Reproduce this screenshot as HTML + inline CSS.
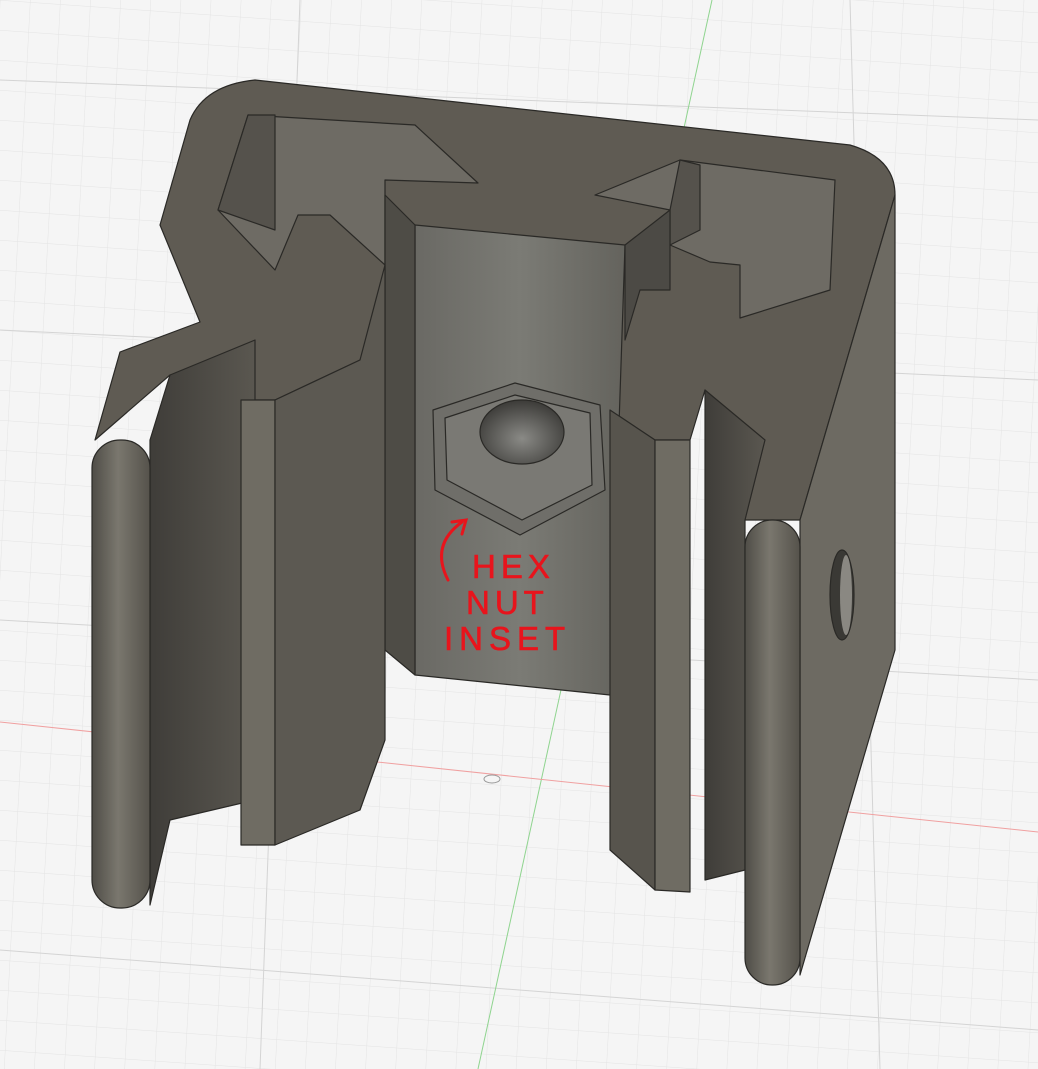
<!DOCTYPE html>
<html><head><meta charset="utf-8"><style>
html,body{margin:0;padding:0;background:#f5f5f5;}
svg{display:block}
</style></head><body>
<svg width="1038" height="1069" viewBox="0 0 1038 1069" xmlns="http://www.w3.org/2000/svg">
<defs>
<linearGradient id="cyl" x1="0" x2="1"><stop offset="0" stop-color="#4f4d47"/><stop offset="0.45" stop-color="#7a776e"/><stop offset="1" stop-color="#55524b"/></linearGradient>
<linearGradient id="wall" x1="0" x2="1"><stop offset="0" stop-color="#6a6964"/><stop offset="0.5" stop-color="#7b7b75"/><stop offset="1" stop-color="#64635d"/></linearGradient>
<linearGradient id="dark" x1="0" x2="1"><stop offset="0" stop-color="#3f3d39"/><stop offset="1" stop-color="#5a5750"/></linearGradient>
<radialGradient id="hole" cx="0.5" cy="0.6" r="0.6"><stop offset="0" stop-color="#8a8a86"/><stop offset="1" stop-color="#3c3b38"/></radialGradient>
<pattern id="grid" width="30" height="30" patternUnits="userSpaceOnUse" patternTransform="skewY(4) skewX(-3)">
<path d="M30,0 L0,0 0,30" fill="none" stroke="#e4e4e4" stroke-width="1"/>
</pattern>
</defs>
<rect width="1038" height="1069" fill="#f5f5f5"/>
<rect width="1038" height="1069" fill="url(#grid)"/>
<g stroke="#d4d4d4" stroke-width="1">
<line x1="0" y1="80" x2="1038" y2="120"/><line x1="0" y1="330" x2="1038" y2="380"/>
<line x1="0" y1="620" x2="1038" y2="680"/><line x1="0" y1="950" x2="1038" y2="1030"/>
<line x1="300" y1="0" x2="260" y2="1069"/><line x1="850" y1="0" x2="880" y2="1069"/>
</g>
<line x1="712" y1="0" x2="478" y2="1069" stroke="#8fd48f" stroke-width="1"/>
<line x1="0" y1="722" x2="1038" y2="832" stroke="#f0a0a0" stroke-width="1"/>
<ellipse cx="492" cy="779" rx="8" ry="4" fill="none" stroke="#999"/>

<g stroke="#2a2926" stroke-width="1.2" stroke-linejoin="round">
<path d="M95,440 L120,352 L200,322 L160,225 L190,120 Q205,85 255,80 L850,145 Q895,158 895,195 L800,520 L745,520 L705,390 L690,440 L655,440 L610,410 L360,360 L275,400 L240,400 L170,375 Z" fill="#5f5b53"/>
<path d="M895,195 L895,650 L800,975 L800,520 Z" fill="#6d6a62"/>
<path d="M248,115 L415,125 L478,183 L385,180 L385,265 L330,215 L298,215 L275,270 L218,210 Z" fill="#6e6b64"/>
<path d="M248,115 L275,115 L275,230 L218,210 Z" fill="#55524c"/>
<path d="M595,195 L680,160 L835,180 L830,290 L740,318 L740,265 L710,262 L670,245 L670,210 Z" fill="#6e6b64"/>
<path d="M680,160 L700,165 L700,230 L670,245 L670,210 Z" fill="#55524c"/>
<path d="M415,225 L625,245 L610,695 L415,675 Z" fill="url(#wall)"/>
<path d="M385,195 L415,225 L415,675 L385,650 Z" fill="#4e4c46"/>
<path d="M625,245 L670,210 L670,290 L640,290 L625,340 Z" fill="#4c4a45"/>
<path d="M433,410 L515,383 L600,405 L605,490 L520,535 L435,490 Z" fill="#6f6e69"/>
<path d="M445,418 L515,395 L590,413 L592,485 L522,520 L447,480 Z" fill="#7a7974"/>
<ellipse cx="522" cy="432" rx="42" ry="32" fill="url(#hole)"/>
<path d="M150,440 L170,375 L255,340 L255,800 L170,820 L150,905 Z" fill="url(#dark)"/>
<path d="M241,400 L275,400 L275,845 L241,845 Z" fill="#6f6c63"/>
<path d="M275,400 L360,360 L385,265 L385,740 L360,810 L275,845 Z" fill="#5c5952"/>
<rect x="92" y="440" width="58" height="468" rx="28" fill="url(#cyl)"/>
<path d="M610,410 L655,440 L655,890 L610,850 Z" fill="#57544d"/>
<path d="M655,440 L690,440 L690,892 L655,890 Z" fill="#6f6c63"/>
<path d="M705,390 L765,440 L745,520 L745,870 L705,880 Z" fill="url(#dark)"/>
<rect x="745" y="520" width="55" height="465" rx="27" fill="url(#cyl)"/>
<ellipse cx="842" cy="595" rx="12" ry="45" fill="#3a3935"/>
<ellipse cx="846" cy="595" rx="6" ry="40" fill="#8a8882" stroke="none"/>
</g>

<path d="M462,522 Q430,545 448,580 M452,522 L466,520 L462,534" fill="none" stroke="#e8141c" stroke-width="3" stroke-linecap="round"/>
<g fill="#e8141c" font-family="Liberation Sans, sans-serif" font-size="33" stroke="#e8141c" stroke-width="0.6">
<text x="472" y="578" letter-spacing="5">HEX</text>
<text x="466" y="614" letter-spacing="5">NUT</text>
<text x="444" y="650" letter-spacing="6">INSET</text>
</g>
</svg>
</body></html>
